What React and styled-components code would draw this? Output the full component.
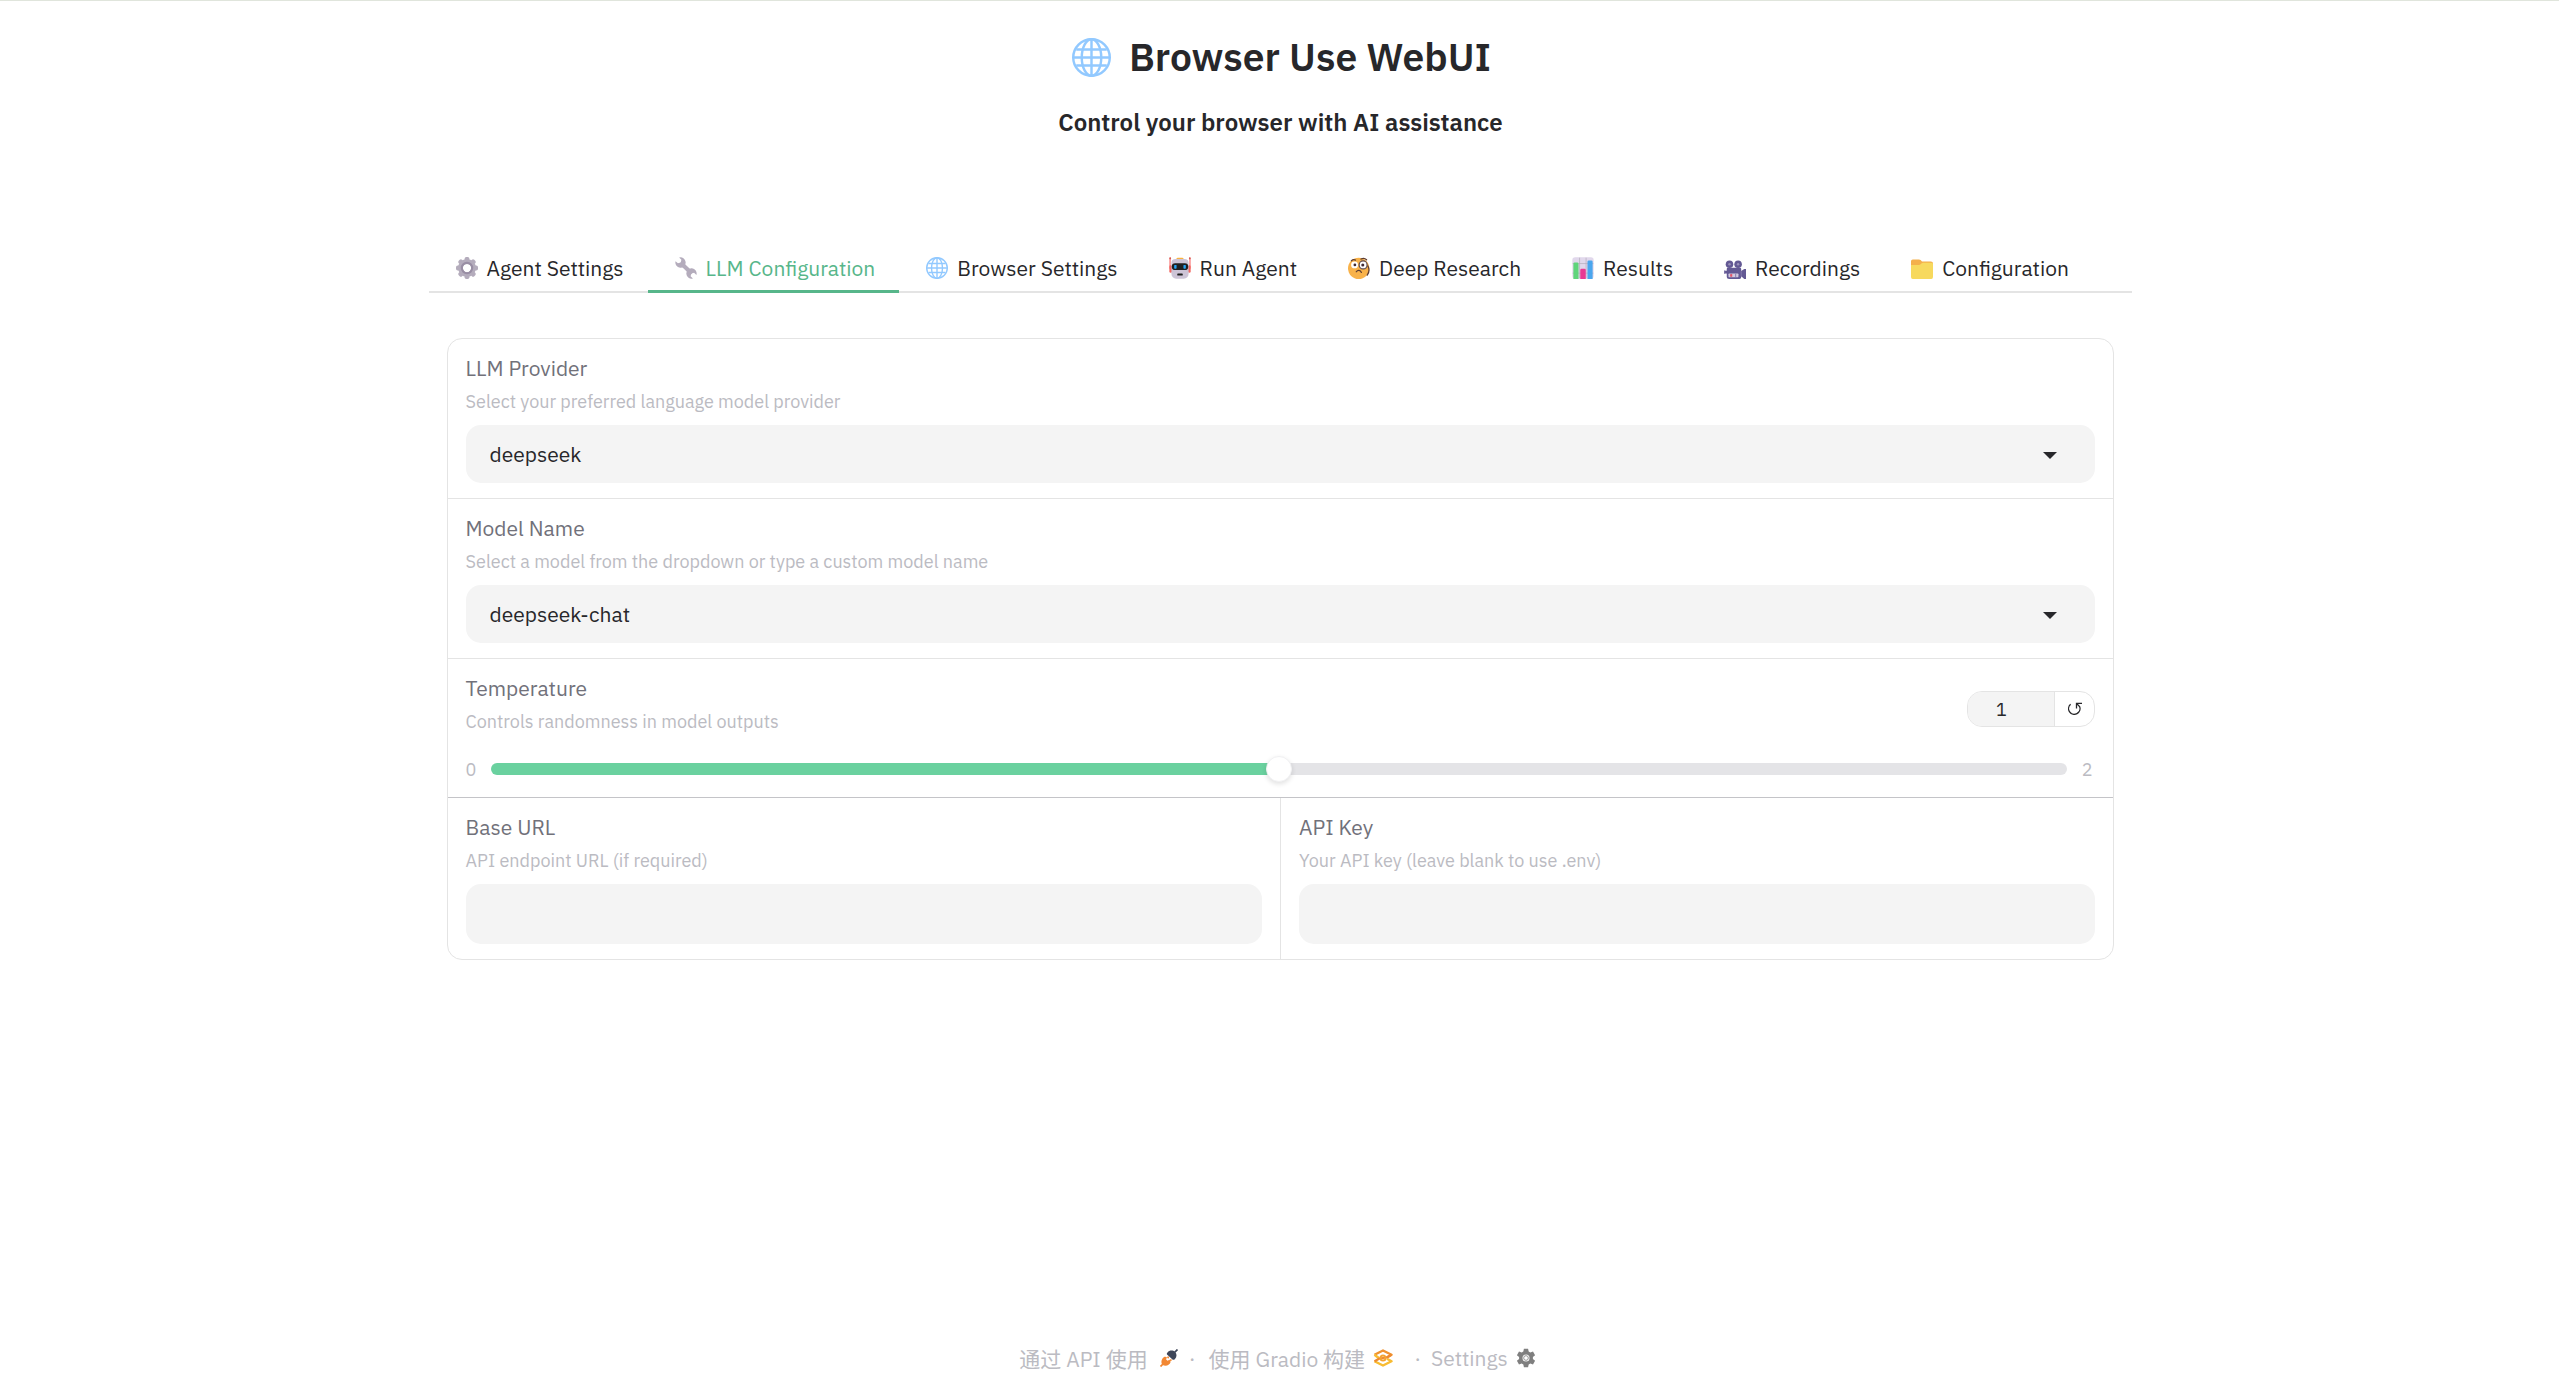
import React, { useState } from 'react';
import styled, { createGlobalStyle, css } from 'styled-components';

const GlobeIcon = ({ size }) => (
    <svg width={size} height={size} viewBox="0 0 32 32" fill="none" stroke="#92C9FF" strokeWidth="2" aria-hidden="true">
        <circle cx="16" cy="16" r="15" />
        <ellipse cx="16" cy="16" rx="8" ry="15" />
        <path d="M16 1v30M1 16h30M3.5 9.5h25M3.5 22.5h25" />
    </svg>
);

const TOOTH_ANGLES = [0, 45, 90, 135, 180, 225, 270, 315];

const AgentIcon = () => (
    <svg width="22" height="22" viewBox="0 0 32 32" aria-hidden="true">
        {TOOTH_ANGLES.map((angle) => (
            <rect key={angle} x="12.5" y="0" width="7" height="9" rx="2.5" fill="#B4ACBC" transform={`rotate(${angle} 16 16)`} />
        ))}
        <circle cx="16" cy="16" r="9.5" fill="none" stroke="#B4ACBC" strokeWidth="7" />
        <circle cx="16" cy="16" r="7.5" fill="none" stroke="#998EA4" strokeWidth="3" />
    </svg>
);

const WrenchIcon = () => (
    <svg width="22" height="22" viewBox="0 0 32 32" aria-hidden="true">
        <path d="M8 8.500L24.500 24" stroke="#B4ACBC" strokeWidth="6" />
        <path d="M6 0.800a7.500 7.500 0 1 1-5.200 5.200l3.500 3 4-1 1-4z" fill="#B4ACBC" />
        <path d="M26 31.200a7.500 7.500 0 1 1 5.200-5.200l-3.500-3-4 1-1 4z" fill="#B4ACBC" />
    </svg>
);

const RobotIcon = () => (
    <svg width="22" height="22" viewBox="0 0 32 32" aria-hidden="true">
        <path d="M1.500 1v16M30.500 1v16" stroke="#F8312F" strokeWidth="1.200" />
        <rect x="0.500" y="0.500" width="2.500" height="3" rx="1.200" fill="#D3594F" />
        <rect x="29" y="0.500" width="2.500" height="3" rx="1.200" fill="#D3594F" />
        <rect x="0.500" y="12" width="4" height="11" rx="2" fill="#F1665F" />
        <rect x="27.500" y="12" width="4" height="11" rx="2" fill="#F1665F" />
        <path d="M10.500 4c0-2 1-3 2-3h7c1 0 2 1 2 3z" fill="#F9B23E" />
        <path d="M3.500 9c0-4 2-6 6-6h13c4 0 6 2 6 6v15c0 5-3 7.500-7 7.500h-11c-4 0-7-2.500-7-7.500z" fill="#CDC4D6" />
        <rect x="4" y="9" width="24" height="10" rx="5" fill="#212121" />
        <rect x="7.500" y="11.500" width="3.500" height="5.500" rx="1" fill="#26A3F3" />
        <rect x="21" y="11.500" width="3.500" height="5.500" rx="1" fill="#26A3F3" />
        <rect x="12" y="24" width="8" height="3" rx="1" fill="#212121" />
    </svg>
);

const MonocleIcon = () => (
    <svg width="22" height="22" viewBox="0 0 32 32" aria-hidden="true">
        <circle cx="15.500" cy="16.500" r="15.500" fill="#F8B24A" />
        <circle cx="9.500" cy="11.500" r="5" fill="#fff" />
        <circle cx="10" cy="11.500" r="2" fill="#402A32" />
        <circle cx="22" cy="11.500" r="5.800" fill="#fff" stroke="#5D4C50" strokeWidth="1.800" />
        <circle cx="21.500" cy="11.500" r="2.200" fill="#402A32" />
        <path d="M5 5.500c1.500-1.500 4-2 6-1M19 3c2.500-1.500 6-1 8 1M12 21.500c2-3 6-3 7.500 1M29 13c2 4 1.500 10-1 13.500" fill="none" stroke="#5D3C31" strokeWidth="1.800" strokeLinecap="round" />
    </svg>
);

const ChartIcon = () => (
    <svg width="22" height="22" viewBox="0 0 32 32" aria-hidden="true">
        <rect x="0.500" y="0.500" width="31" height="31" rx="4" fill="#E1D8EC" />
        <path d="M11 1v30M20.500 1v30M1 9.500h30M1 23.500h30" stroke="#B4ACBC" strokeWidth="1" />
        <path d="M2 32V10q0-2 2-2h3.500q2 0 2 2v22z" fill="#5FD57B" />
        <path d="M12 32V19q0-2 2-2h4q2 0 2 2v13z" fill="#E83A93" />
        <path d="M22.500 32V7q0-2 2-2H28q2 0 2 2v25z" fill="#4AA6EE" />
    </svg>
);

const CameraIcon = () => (
    <svg width="22" height="22" viewBox="0 0 32 32" aria-hidden="true">
        <circle cx="8" cy="10.500" r="5.500" fill="#635994" />
        <circle cx="20.500" cy="10.500" r="5.500" fill="#635994" />
        <circle cx="8" cy="10.500" r="1.800" fill="#9A90B8" />
        <circle cx="20.500" cy="10.500" r="1.800" fill="#9A90B8" />
        <path d="M0 20h4v-3q0-1.500 2-1.500h17q2 0 2 2v3l4.500-3H32v14.500h-2.500L25 28v1.500q0 2.500-2.500 2.500h-15Q4 32 4 29v-5H0z" fill="#635994" />
        <path d="M25 20.500v7M1 19.500v5" stroke="#8B80B0" strokeWidth="1.200" />
        <rect x="6.500" y="24" width="14.500" height="5.500" rx="1" fill="#D3C9DF" />
        <path d="M10.500 24.500v4.500M17 24.500v4.500" stroke="#635994" strokeWidth="1" />
        <rect x="9" y="25" width="3" height="3.500" fill="#EE5263" />
    </svg>
);

const FolderIcon = () => (
    <svg width="22" height="22" viewBox="0 0 32 32" aria-hidden="true">
        <path d="M0 6q0-2.500 2.500-2.500h9q1.500 0 2.500 1l2 2h13q3 0 3 3V14H0z" fill="#F4B04B" />
        <path d="M0 11.500h11.500q1.500 0 2.500-1l1.500-1.500q.7-.7 2-.7H30q2 0 2 2V29q0 3-2.500 3h-27Q0 32 0 29z" fill="#F7D95E" />
    </svg>
);

const PlugIcon = () => (
    <svg width="18" height="18" viewBox="0 0 36 36" aria-hidden="true">
        <path d="M1 35l6-6" stroke="#F28732" strokeWidth="3.500" />
        <path d="M5 19c3-5 7-4 9-2l-2 3.500 3 3 4-2c3 3 3 7-2 10-4 3-9 2-12 0-3-3-3-8 0-12.500z" fill="#F28732" />
        <path d="M14 17l2-3 2.500 2.500-2 3zM19 22l3-2 2 2.500-3 2z" fill="#F28732" />
        <path d="M29 7l6-6" stroke="#3E4659" strokeWidth="3.500" />
        <path d="M15 7c4-5 11-5 15-1 4 4 4 9 0 14-2 2-4 2-5 1L14 11c-1-1 0-3 1-4z" fill="#3E4659" />
    </svg>
);

const GradioIcon = () => (
    <svg width="20" height="18" viewBox="0 0 40 36" fill="none" strokeLinejoin="round" aria-hidden="true">
        <path d="M3 11.500L20 3l17 8.500L28 17" stroke="#F0932F" strokeWidth="5" />
        <path d="M12 18.500L3 11.500M3 24.500L20 33l17-8.500-9-5" stroke="#F8BC32" strokeWidth="5" />
        <path d="M3 24.500L13 19l14-2 10-5.500" stroke="#EE8A31" strokeWidth="4.500" />
        <circle cx="20" cy="18" r="5" stroke="#F4A331" strokeWidth="4" />
    </svg>
);

const GearIcon = () => (
    <svg width="20" height="20" viewBox="0 0 24 24" aria-hidden="true">
        <path
            fill="#7F7F7F"
            fillRule="evenodd"
            d="M9.500 1h5l.7 3.300 2 1.100 3.200-1.200 2.500 4.400-2.600 2.200v2.400l2.600 2.200-2.500 4.400-3.200-1.200-2 1.100-.7 3.300h-5l-.7-3.300-2-1.100-3.200 1.200-2.500-4.400 2.600-2.200v-2.400L1.100 8.600l2.500-4.400 3.200 1.200 2-1.100zM12 7.800a4.200 4.200 0 1 0 0 8.400 4.200 4.200 0 0 0 0-8.400z"
        />
        <circle cx="12" cy="12" r="2.800" fill="none" stroke="#7F7F7F" strokeWidth="1" />
    </svg>
);

const ResetIcon = () => (
    <svg width="14" height="14" viewBox="0 0 14 14" fill="none" stroke="#27272a" strokeWidth="1.300" aria-hidden="true">
        <path d="M2.600 2.300A5.700 5.700 0 1 0 11.600 4.500L8.800 1.700" />
        <path d="M8.500 6.500V1.300H14" />
    </svg>
);

const TABS = [
    { id: 'agent', label: 'Agent Settings', icon: <AgentIcon /> },
    { id: 'llm', label: 'LLM Configuration', icon: <WrenchIcon /> },
    { id: 'browser', label: 'Browser Settings', icon: <GlobeIcon size={22} /> },
    { id: 'run', label: 'Run Agent', icon: <RobotIcon /> },
    { id: 'research', label: 'Deep Research', icon: <MonocleIcon /> },
    { id: 'results', label: 'Results', icon: <ChartIcon /> },
    { id: 'recordings', label: 'Recordings', icon: <CameraIcon /> },
    { id: 'config', label: 'Configuration', icon: <FolderIcon /> },
];

const SelectField = ({ id, label, info, options }) => (
    <Block>
        <Label htmlFor={id}>{label}</Label>
        <Info>{info}</Info>
        <SelectWrap>
            <Select id={id}>
                {options.map((option) => (
                    <option key={option}>{option}</option>
                ))}
            </Select>
            <Caret viewBox="0 0 14 7" aria-hidden="true">
                <path d="M0 0h14L7 7z" fill="#27272a" />
            </Caret>
        </SelectWrap>
    </Block>
);

const TextField = ({ id, label, info, type }) => (
    <Block>
        <Label htmlFor={id}>{label}</Label>
        <Info>{info}</Info>
        <TextInput id={id} type={type} />
    </Block>
);

const TemperatureField = () => {
    const [value, setValue] = useState(1);

    const handleChange = (event) => {
        setValue(event.target.value);
    };

    return (
        <Block>
            <SliderHead>
                <div>
                    <Label htmlFor="temperature">Temperature</Label>
                    <Info>Controls randomness in model outputs</Info>
                </div>
                <NumberGroup>
                    <NumberInput type="number" min="0" max="2" step="0.1" aria-label="Temperature value" value={value} onChange={handleChange} />
                    <ResetButton type="button" aria-label="Reset to default" onClick={() => setValue(1)}>
                        <ResetIcon />
                    </ResetButton>
                </NumberGroup>
            </SliderHead>
            <SliderRow>
                <span>0</span>
                <Range id="temperature" type="range" min="0" max="2" step="0.1" value={value} onChange={handleChange} style={{ '--fill': `${value * 50}%` }} />
                <span>2</span>
            </SliderRow>
        </Block>
    );
};

export default function App() {
    const [activeTab, setActiveTab] = useState('llm');

    return (
        <Page>
            <GlobalStyle />
            <Container>
                <Header>
                    <Title><GlobeIcon size={39} />Browser Use WebUI</Title>
                    <Subtitle>Control your browser with AI assistance</Subtitle>
                </Header>
                <TabBar role="tablist">
                    {TABS.map(({ id, label, icon }) => (
                        <Tab key={id} type="button" role="tab" aria-selected={id === activeTab} $active={id === activeTab} onClick={() => setActiveTab(id)}>
                            {icon}
                            {label}
                        </Tab>
                    ))}
                </TabBar>
                <Panel>
                    <SelectField id="provider" label="LLM Provider" info="Select your preferred language model provider" options={['deepseek']} />
                    <SelectField id="model" label="Model Name" info="Select a model from the dropdown or type a custom model name" options={['deepseek-chat']} />
                    <TemperatureField />
                    <Columns>
                        <TextField id="base-url" label="Base URL" info="API endpoint URL (if required)" type="text" />
                        <TextField id="api-key" label="API Key" info="Your API key (leave blank to use .env)" type="password" />
                    </Columns>
                </Panel>
            </Container>
            <Footer>
                <FooterLink href="#api" $gap="12px">通过 API 使用 <PlugIcon /></FooterLink>
                <Dot>·</Dot>
                <FooterLink href="#gradio" $gap="8px">使用 Gradio 构建 <GradioIcon /></FooterLink>
                <Dot $wide>·</Dot>
                <FooterLink href="#settings" $gap="8px">Settings <GearIcon /></FooterLink>
            </Footer>
        </Page>
    );
}

const GlobalStyle = createGlobalStyle`
    * {
        box-sizing: border-box;
    }

    body {
        margin: 0;
        background-color: #fff;
    }

    body, button, input, select {
        font-family: "IBM Plex Sans", Roboto, "Noto Sans CJK SC", sans-serif;
    }
`;

const Page = styled.div`
    display: flex;
    flex-direction: column;
    min-height: 100vh;
    padding-left: 2px;
    border-top: 1px solid #e0e5dc;
    color: #27272a;
`;

const Container = styled.main`
    flex: 1;
    width: 70%;
    margin: 0 auto;
    padding: 0 43px;
`;

const Header = styled.header`
    text-align: center;
    padding-top: 28px;
`;

const Title = styled.h1`
    display: flex;
    justify-content: center;
    align-items: center;
    gap: 18px;
    margin: 0;
    padding-left: 2px;
    font-size: 39px;
    line-height: 56px;
    font-weight: 600;
`;

const Subtitle = styled.h3`
    margin: 20px 0 0;
    font-size: 24px;
    line-height: 34px;
    font-weight: 600;
`;

const TabBar = styled.div`
    display: flex;
    margin-top: 106px;
    box-shadow: inset 0 -2px 0 #e4e4e4;
`;

const Tab = styled.button`
    display: flex;
    align-items: center;
    gap: 9px;
    height: 48px;
    padding: 0 24px 0 27px;
    border: 0;
    border-bottom: 3px solid transparent;
    background: none;
    color: #27272a;
    font-size: 21px;
    white-space: nowrap;
    cursor: pointer;

    ${(props) => props.$active && css`
        color: #57b68a;
        border-color: #57b68a;
    `}
`;

const Panel = styled.section`
    margin: 45px 18px 0;
    border: 1px solid #e4e4e4;
    border-radius: 15px;
`;

const Block = styled.div`
    flex: 1;
    padding: 15px 18px;

    & + & {
        border-top: 1px solid #e4e4e4;
    }
`;

const Columns = styled.div`
    display: flex;
    border-top: 1px solid #c4c4c8;

    ${Block} + ${Block} {
        border-top: 0;
        border-left: 1px solid #e4e4e4;
    }
`;

const Label = styled.label`
    display: block;
    color: #71717a;
    font-size: 21px;
    line-height: 29px;
`;

const Info = styled.div`
    margin: 6px 0 10px;
    color: #bbbbc2;
    font-size: 18px;
    line-height: 26px;
`;

const field = css`
    display: block;
    width: 100%;
    border: 0;
    border-radius: 15px;
    background-color: #f4f4f4;
    color: #27272a;
    font-size: 21px;
    padding: 0 24px;
`;

const SelectWrap = styled.div`
    position: relative;
`;

const Select = styled.select`
    ${field}
    height: 58px;
    appearance: none;
`;

const Caret = styled.svg`
    position: absolute;
    right: 38px;
    top: 27px;
    width: 14px;
    height: 7px;
    pointer-events: none;
`;

const TextInput = styled.input`
    ${field}
    height: 60px;
`;

const SliderHead = styled.div`
    display: flex;
    justify-content: space-between;
    align-items: flex-start;
`;

const NumberGroup = styled.div`
    display: flex;
    width: 128px;
    height: 36px;
    margin-top: 17px;
    border: 1px solid #e4e4e4;
    border-radius: 15px;
    overflow: hidden;
`;

const NumberInput = styled.input`
    width: 87px;
    padding: 0 20px 0 0;
    border: 0;
    border-right: 1px solid #e4e4e4;
    background-color: #f4f4f4;
    color: #27272a;
    font-size: 18px;
    text-align: center;
    appearance: textfield;

    &::-webkit-inner-spin-button {
        display: none;
    }
`;

const ResetButton = styled.button`
    flex: 1;
    display: flex;
    justify-content: center;
    align-items: center;
    padding: 0;
    border: 0;
    background: none;
    cursor: pointer;
`;

const SliderRow = styled.div`
    display: flex;
    align-items: center;
    gap: 15px;
    height: 26px;
    margin-top: 11px;
    padding-right: 3px;
    color: #bbbbc2;
    font-size: 18px;
`;

const Range = styled.input`
    flex: 1;
    height: 12px;
    margin: 0;
    border-radius: 6px;
    appearance: none;
    background: linear-gradient(to right, #6ad19f var(--fill), #e4e4e7 var(--fill));

    &::-webkit-slider-thumb {
        appearance: none;
        width: 26px;
        height: 26px;
        border: 1px solid #f1f1f3;
        border-radius: 50%;
        background-color: #fff;
        box-shadow: 0 2px 5px rgba(0, 0, 0, 0.12);
    }
`;

const Footer = styled.footer`
    display: flex;
    justify-content: center;
    align-items: center;
    height: 30px;
    margin-bottom: 26px;
    padding-right: 6px;
    color: #bbbbc2;
    font-size: 21px;
`;

const FooterLink = styled.a`
    display: flex;
    align-items: center;
    gap: ${(props) => props.$gap};
    color: inherit;
    text-decoration: none;
`;

const Dot = styled.span`
    margin: ${(props) => (props.$wide ? '0 10px 0 21px' : '0 13px 0 11px')};
`;
